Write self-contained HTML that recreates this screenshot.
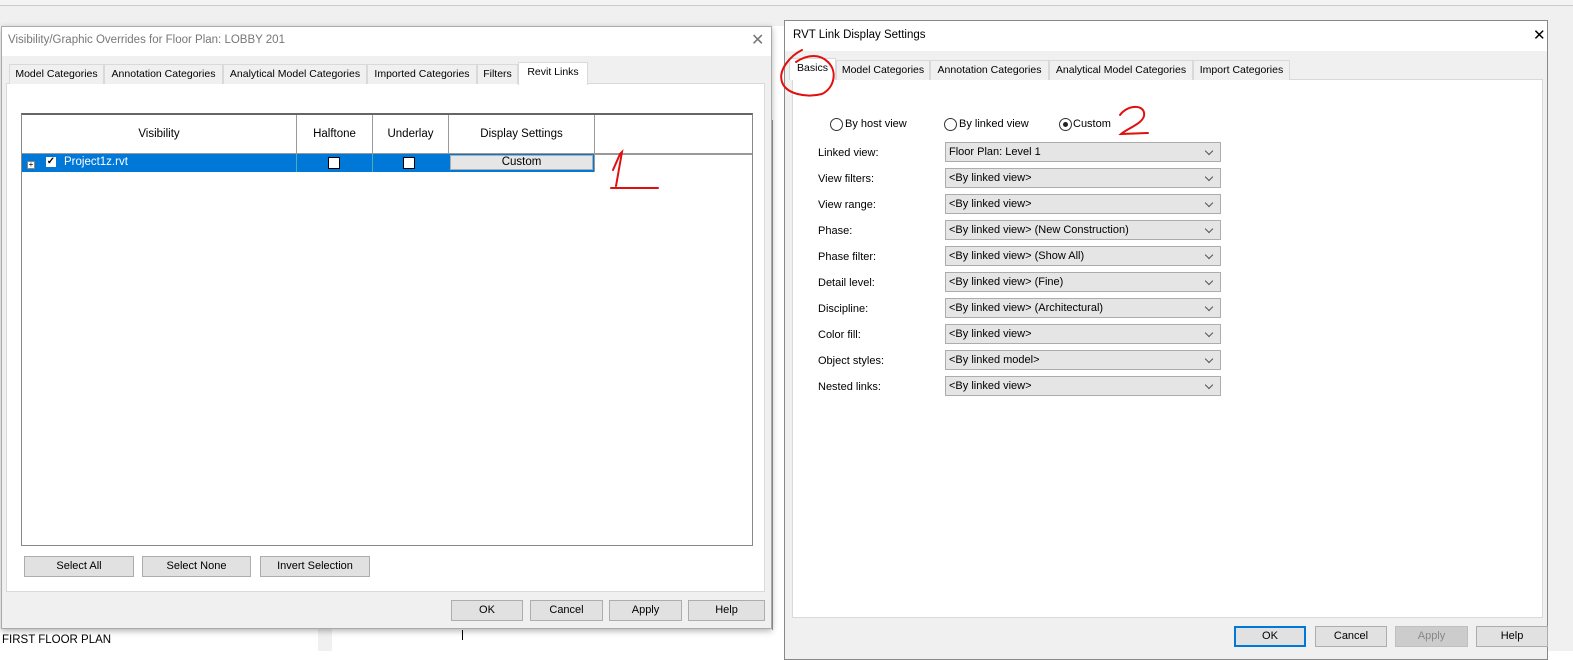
<!DOCTYPE html>
<html><head><meta charset="utf-8"><style>
*{box-sizing:border-box;margin:0;padding:0}
body{width:1573px;height:651px;overflow:hidden;background:#fff;font-family:"Liberation Sans",sans-serif;font-size:11px;color:#000;position:relative}
.a{position:absolute}
.btn{position:absolute;background:#e1e1e1;border:1px solid #adadad;text-align:center;font-size:11px}
.tab{position:absolute;border:1px solid #d9d9d9;border-bottom:none;background:#f0f0f0;padding:0 3px;height:20px;line-height:19px;white-space:nowrap;overflow:hidden;font-size:10.5px;text-align:center}
.dd{position:absolute;left:945px;width:276px;height:20px;background:#e5e5e5;border:1px solid #acacac;padding-left:3px;line-height:18px}
.dd:after{content:"";position:absolute;right:8px;top:5px;width:5px;height:5px;border-right:1px solid #555;border-bottom:1px solid #555;transform:rotate(45deg)}
.lb{position:absolute;left:818px}
.rad{position:absolute;width:13px;height:13px;border:1px solid #333;border-radius:50%;background:#fff}
</style></head><body>
<div class="a" style="left:0;top:0;width:1573px;height:6px;background:#f3f3f3;border-bottom:1px solid #ccc"></div>
<div class="a" style="left:0;top:6px;width:1573px;height:20px;background:#f0f0f0"></div>
<div class="a" style="left:1547px;top:20px;width:26px;height:631px;background:#f0f0f0"></div>
<div class="a" style="left:0;top:628px;width:330px;height:23px;background:#fff"></div>
<div class="a" style="left:318px;top:628px;width:14px;height:23px;background:#f0f0f0"></div>
<div class="a" style="left:2px;top:634px;font-size:11.5px">FIRST FLOOR PLAN</div>
<div class="a" style="left:462px;top:630px;width:1px;height:10px;background:#000"></div>
<div class="a" style="left:772px;top:120px;width:12px;height:510px;background:#fff;border-left:1px solid #999"></div>

<div class="a" style="left:1px;top:26px;width:771px;height:603px;background:#f0f0f0;border:1px solid #aaa;box-shadow:0 2px 6px rgba(0,0,0,.3)"></div>
<div class="a" style="left:2px;top:27px;width:769px;height:29px;background:#fff"></div>
<div class="a" style="left:8px;top:34px;color:#777;font-size:11.5px">Visibility/Graphic Overrides for Floor Plan: LOBBY 201</div>
<div class="a" style="left:751px;top:30px;font-size:16px;color:#777">✕</div>
<div class="a" style="left:6px;top:83px;width:759px;height:509px;background:#fff;border:1px solid #d9d9d9"></div>
<div class="tab" style="left:9px;top:64px;width:95px">Model Categories</div>
<div class="tab" style="left:104px;top:64px;width:119px">Annotation Categories</div>
<div class="tab" style="left:223px;top:64px;width:144px">Analytical Model Categories</div>
<div class="tab" style="left:367px;top:64px;width:110px">Imported Categories</div>
<div class="tab" style="left:477px;top:64px;width:41px">Filters</div>
<div class="tab" style="left:518px;top:62px;width:70px;height:23px;background:#fff">Revit Links</div>
<div class="a" style="left:21px;top:113px;width:732px;height:433px;background:#fff;border:1px solid #888;border-top:2px solid #666"></div>
<div class="a" style="left:22px;top:115px;width:730px;height:39px;background:#fff;border-bottom:1px solid #999"></div>
<div class="a" style="left:296px;top:115px;width:1px;height:57px;background:#999"></div>
<div class="a" style="left:372px;top:115px;width:1px;height:57px;background:#999"></div>
<div class="a" style="left:448px;top:115px;width:1px;height:57px;background:#999"></div>
<div class="a" style="left:594px;top:115px;width:1px;height:57px;background:#999"></div>
<div class="a" style="left:22px;top:128px;width:274px;text-align:center;font-size:11.5px">Visibility</div>
<div class="a" style="left:297px;top:128px;width:75px;text-align:center;font-size:11.5px">Halftone</div>
<div class="a" style="left:373px;top:128px;width:75px;text-align:center;font-size:11.5px">Underlay</div>
<div class="a" style="left:449px;top:128px;width:145px;text-align:center;font-size:11.5px">Display Settings</div>
<div class="a" style="left:22px;top:154px;width:572px;height:18px;background:#0078d7"></div>
<div class="a" style="left:296px;top:154px;width:1px;height:18px;background:#5aa"></div>
<div class="a" style="left:372px;top:154px;width:1px;height:18px;background:#5aa"></div>
<div class="a" style="left:594px;top:154px;width:158px;height:1px;background:#999"></div>
<div class="a" style="left:27px;top:161px;width:8px;height:8px;background:#fff;border:1px solid #888;font-size:8px;line-height:6px;text-align:center">+</div>
<div class="a" style="left:46px;top:157px;width:10px;height:10px;background:#fff;font-size:10px;line-height:10px;text-align:center;font-weight:bold">✓</div>
<div class="a" style="left:64px;top:156px;color:#fff;font-size:11.5px">Project1z.rvt</div>
<div class="a" style="left:328px;top:157px;width:12px;height:12px;background:#fff;border:1px solid #000"></div>
<div class="a" style="left:403px;top:157px;width:12px;height:12px;background:#fff;border:1px solid #000"></div>
<div class="btn" style="left:450px;top:155px;width:143px;height:15px;line-height:13px;background:#e6e6e6;font-size:11.5px">Custom</div>
<div class="btn" style="left:24px;top:556px;width:110px;height:21px;line-height:19px">Select All</div>
<div class="btn" style="left:142px;top:556px;width:109px;height:21px;line-height:19px">Select None</div>
<div class="btn" style="left:260px;top:556px;width:110px;height:21px;line-height:19px">Invert Selection</div>
<div class="btn" style="left:451px;top:600px;width:72px;height:21px;line-height:19px">OK</div>
<div class="btn" style="left:530px;top:600px;width:73px;height:21px;line-height:19px">Cancel</div>
<div class="btn" style="left:609px;top:600px;width:73px;height:21px;line-height:19px">Apply</div>
<div class="btn" style="left:688px;top:600px;width:77px;height:21px;line-height:19px">Help</div>

<div class="a" style="left:784px;top:20px;width:764px;height:640px;background:#f0f0f0;border:1px solid #888"></div>
<div class="a" style="left:785px;top:21px;width:762px;height:30px;background:#fff"></div>
<div class="a" style="left:793px;top:29px;font-size:11.5px">RVT Link Display Settings</div>
<div class="a" style="left:1533px;top:26px;font-size:15px">✕</div>
<div class="a" style="left:792px;top:79px;width:751px;height:539px;background:#fff;border:1px solid #d9d9d9"></div>
<div class="tab" style="left:789px;top:58px;width:47px;height:22px;background:#fff;line-height:18px">Basics</div>
<div class="tab" style="left:836px;top:60px;width:94px">Model Categories</div>
<div class="tab" style="left:930px;top:60px;width:119px">Annotation Categories</div>
<div class="tab" style="left:1049px;top:60px;width:144px">Analytical Model Categories</div>
<div class="tab" style="left:1193px;top:60px;width:97px">Import Categories</div>
<div class="rad" style="left:830px;top:118px"></div><div class="a" style="left:845px;top:118px">By host view</div>
<div class="rad" style="left:944px;top:118px"></div><div class="a" style="left:959px;top:118px">By linked view</div>
<div class="rad" style="left:1059px;top:118px"><div style="position:absolute;left:3px;top:3px;width:5px;height:5px;border-radius:50%;background:#222"></div></div><div class="a" style="left:1073px;top:118px">Custom</div>

<div class="lb" style="top:147px">Linked view:</div><div class="dd" style="top:142px">Floor Plan: Level 1</div>
<div class="lb" style="top:173px">View filters:</div><div class="dd" style="top:168px">&lt;By linked view&gt;</div>
<div class="lb" style="top:199px">View range:</div><div class="dd" style="top:194px">&lt;By linked view&gt;</div>
<div class="lb" style="top:225px">Phase:</div><div class="dd" style="top:220px">&lt;By linked view&gt; (New Construction)</div>
<div class="lb" style="top:251px">Phase filter:</div><div class="dd" style="top:246px">&lt;By linked view&gt; (Show All)</div>
<div class="lb" style="top:277px">Detail level:</div><div class="dd" style="top:272px">&lt;By linked view&gt; (Fine)</div>
<div class="lb" style="top:303px">Discipline:</div><div class="dd" style="top:298px">&lt;By linked view&gt; (Architectural)</div>
<div class="lb" style="top:329px">Color fill:</div><div class="dd" style="top:324px">&lt;By linked view&gt;</div>
<div class="lb" style="top:355px">Object styles:</div><div class="dd" style="top:350px">&lt;By linked model&gt;</div>
<div class="lb" style="top:381px">Nested links:</div><div class="dd" style="top:376px">&lt;By linked view&gt;</div>

<div class="btn" style="left:1234px;top:626px;width:72px;height:21px;line-height:17px;border:2px solid #0078d7">OK</div>
<div class="btn" style="left:1315px;top:626px;width:72px;height:21px;line-height:19px">Cancel</div>
<div class="btn" style="left:1395px;top:626px;width:73px;height:21px;line-height:19px;background:#ccc;color:#888;border-color:#bfbfbf">Apply</div>
<div class="btn" style="left:1476px;top:626px;width:72px;height:21px;line-height:19px">Help</div>

<svg class="a" style="left:0;top:0" width="1573" height="651">
<g fill="none" stroke="#e01010" stroke-width="2" stroke-linecap="round">
<path d="M613 170 L620 154 L622 152 L616 186 M611 188 L658 188"/>
<path d="M1120 115 C1128 104 1146 104 1144 116 C1142 124 1128 128 1121 134 L1148 133"/>
<path d="M802 50 C790 56 778 70 782 82 C786 94 806 98 822 94 C834 88 838 72 828 62 C820 54 808 54 796 62"/>
</g></svg>
</body></html>
